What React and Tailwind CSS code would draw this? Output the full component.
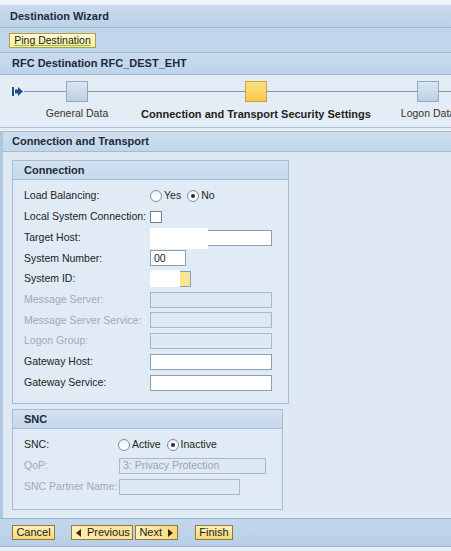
import React from 'react';

function Radio({ checked }) {
  return (
    <span className="relative inline-flex h-[12px] w-[12px] shrink-0 items-center justify-center rounded-full border border-[#7b8ea5] bg-gradient-to-b from-[#eef2f6] to-white">
      {checked && <span className="h-[4px] w-[4px] rounded-full bg-[#2a2a2a]" />}
    </span>
  );
}

function Field({ w = 122, disabled, yellow, children }) {
  let cls = 'border-[#8b9fb6] bg-white';
  if (disabled) cls = 'border-[#a9b9ca] bg-[#dfe9f4] text-[#9aa6b3]';
  if (yellow) cls = 'border-[#8b9fb6] bg-[#fde68f]';
  return (
    <div
      className={`flex h-[16px] items-center border px-[3px] text-[10.5px] ${cls}`}
      style={{ width: w }}
    >
      {children}
    </div>
  );
}

function Row({ label, disabled, labelW = 126, children }) {
  return (
    <div className="flex h-[20.7px] items-center">
      <div
        className={`shrink-0 text-[10.5px] ${disabled ? 'text-[#a2aab3]' : 'text-[#222]'}`}
        style={{ width: labelW }}
      >
        {label}
      </div>
      {children}
    </div>
  );
}

function Group({ title, width, children }) {
  return (
    <div className="border border-[#a6bdd7] bg-[#e0ebf6]" style={{ width }}>
      <div className="flex h-[19px] items-center border-b border-[#a6bdd7] bg-gradient-to-b from-[#d3e1f0] to-[#c6d8ec] pl-[11px] text-[11px] font-bold text-[#1d2a3a]">
        {title}
      </div>
      {children}
    </div>
  );
}

function Btn({ children, className = '' }) {
  return (
    <button
      className={`flex h-[15px] items-center justify-center border border-[#8f7a3c] bg-gradient-to-b from-[#fdf0b8] to-[#f7d874] text-[11px] leading-none text-[#1a1a1a] ${className}`}
    >
      {children}
    </button>
  );
}

export default function App() {
  return (
    <div className="h-[551px] w-[451px] overflow-hidden bg-[#e8eef5] font-['Liberation_Sans',Arial,sans-serif] text-[#222]">
      <div className="h-[5px] bg-[#eef3f8]" />

      {/* wizard title */}
      <div className="flex h-[23px] items-center border-b border-[#9fb8d2] bg-gradient-to-b from-[#c8daec] to-[#bcd2e8] pl-[10px] text-[11px] font-bold text-[#1d2a3a]">
        Destination Wizard
      </div>

      {/* toolbar */}
      <div className="flex h-[25px] items-center border-b border-[#9fb8d2] bg-[#c2d6eb] pl-[9px]">
        <button className="flex h-[15px] w-[87px] items-center justify-center border border-[#b59c4d] bg-gradient-to-b from-[#fefbd0] to-[#fbef9a] text-[10.5px] leading-none text-[#1a1a1a] underline decoration-[#7fc25a]">
          Ping Destination
        </button>
      </div>

      {/* destination name */}
      <div className="flex h-[22px] items-center border-b border-[#9fb8d2] bg-gradient-to-b from-[#c9dbed] to-[#bed3e9] pl-[12px] text-[11px] font-bold text-[#1d2a3a]">
        RFC Destination RFC_DEST_EHT
      </div>

      {/* roadmap, the last step runs past the right edge */}
      <div className="relative h-[53px] overflow-hidden border-b border-[#a9bfd7] bg-[#e4edf6]">
        <div className="absolute left-[24px] right-0 top-[16px] h-[1px] bg-[#7c97b5]" />
        <svg className="absolute left-[12px] top-[11px]" width="11" height="11" viewBox="0 0 11 11">
          <rect x="0" y="1" width="2" height="9" fill="#1f4f8c" />
          <path d="M3 3.5h3V1l5 4.5L6 10V7.5H3z" fill="#1f4f8c" />
        </svg>
        <div className="relative flex pt-[6px]">
          <div className="ml-[32px] flex w-[90px] shrink-0 flex-col items-center">
            <div className="h-[21px] w-[22px] border border-[#8ea9c6] bg-gradient-to-b from-[#dbe6f1] to-[#bccfe3]" />
            <div className="mt-[4px] whitespace-nowrap text-[10.5px] text-[#333]">General Data</div>
          </div>
          <div className="ml-[19px] flex w-[230px] shrink-0 flex-col items-center">
            <div className="h-[21px] w-[22px] border border-[#cfa436] bg-gradient-to-b from-[#fde082] to-[#f7c84a]" />
            <div className="mt-[4px] whitespace-nowrap text-[11px] font-bold text-[#222]">
              Connection and Transport Security Settings
            </div>
          </div>
          <div className="ml-[27px] flex w-[60px] shrink-0 flex-col items-center">
            <div className="h-[21px] w-[22px] border border-[#8ea9c6] bg-gradient-to-b from-[#dbe6f1] to-[#bccfe3]" />
            <div className="mt-[4px] whitespace-nowrap text-[10.5px] text-[#333]">Logon Data</div>
          </div>
        </div>
      </div>

      {/* section */}
      <div className="mt-[3px] border-l-[3px] border-[#b0c6de]">
        <div className="flex h-[21px] items-center border-y border-[#a3bbd5] bg-gradient-to-b from-[#cfdfef] to-[#c2d6eb] pl-[9px] text-[11px] font-bold text-[#1d2a3a]">
          Connection and Transport
        </div>

        <div className="flex h-[366px] flex-col gap-[5px] bg-[#dfe9f4] pl-[9px] pt-[8px]">
          <Group title="Connection" width={277}>
            <div className="relative pb-[10px] pl-[11px] pt-[6px]">
              <Row label="Load Balancing:">
                <div className="flex items-center gap-[2px] text-[10.5px]">
                  <Radio />
                  <span className="mr-[4px]">Yes</span>
                  <Radio checked />
                  <span>No</span>
                </div>
              </Row>
              <Row label="Local System Connection:">
                <span className="h-[12px] w-[12px] border border-[#6f8296] bg-white" />
              </Row>
              <Row label="Target Host:">
                <Field />
              </Row>
              <Row label="System Number:">
                <Field w={36}>00</Field>
              </Row>
              <Row label="System ID:">
                <Field w={41} yellow />
              </Row>
              <Row label="Message Server:" disabled>
                <Field disabled />
              </Row>
              <Row label="Message Server Service:" disabled>
                <Field disabled />
              </Row>
              <Row label="Logon Group:" disabled>
                <Field disabled />
              </Row>
              <Row label="Gateway Host:">
                <Field />
              </Row>
              <Row label="Gateway Service:">
                <Field />
              </Row>
              {/* blanked values */}
              <div className="absolute left-[137px] top-[48px] h-[21px] w-[58px] bg-white" />
              <div className="absolute left-[137px] top-[90px] h-[17px] w-[30px] bg-white" />
            </div>
          </Group>

          <Group title="SNC" width={271}>
            <div className="pb-[12px] pl-[11px] pt-[6px]">
              <Row label="SNC:" labelW={94}>
                <div className="flex items-center gap-[2px] text-[10.5px]">
                  <Radio />
                  <span className="mr-[4px]">Active</span>
                  <Radio checked />
                  <span>Inactive</span>
                </div>
              </Row>
              <Row label="QoP:" labelW={95} disabled>
                <Field w={147} disabled>3: Privacy Protection</Field>
              </Row>
              <Row label="SNC Partner Name:" labelW={95} disabled>
                <Field w={121} disabled />
              </Row>
            </div>
          </Group>
        </div>
      </div>

      {/* footer */}
      <div className="flex h-[29px] items-center border-y border-[#9db6d1] bg-gradient-to-b from-[#c3d7eb] to-[#b9cfe7] pl-[12px]">
        <Btn className="w-[43px]">Cancel</Btn>
        <Btn className="ml-[16px] w-[62px] justify-start gap-[6px] bg-gradient-to-r from-[#f6b23f] via-[#fbe59a] to-[#fbe59a] pl-[4px]">
          <svg width="5" height="8" viewBox="0 0 5 8">
            <path d="M5 0v8L0 4z" fill="#3a2a10" />
          </svg>
          Previous
        </Btn>
        <Btn className="ml-[2px] w-[43px] justify-end gap-[6px] bg-gradient-to-r from-[#fbe59a] via-[#fbe59a] to-[#f6b23f] pr-[4px]">
          Next
          <svg width="5" height="8" viewBox="0 0 5 8">
            <path d="M0 0v8l5-4z" fill="#3a2a10" />
          </svg>
        </Btn>
        <Btn className="ml-[17px] w-[38px]">Finish</Btn>
      </div>
    </div>
  );
}
